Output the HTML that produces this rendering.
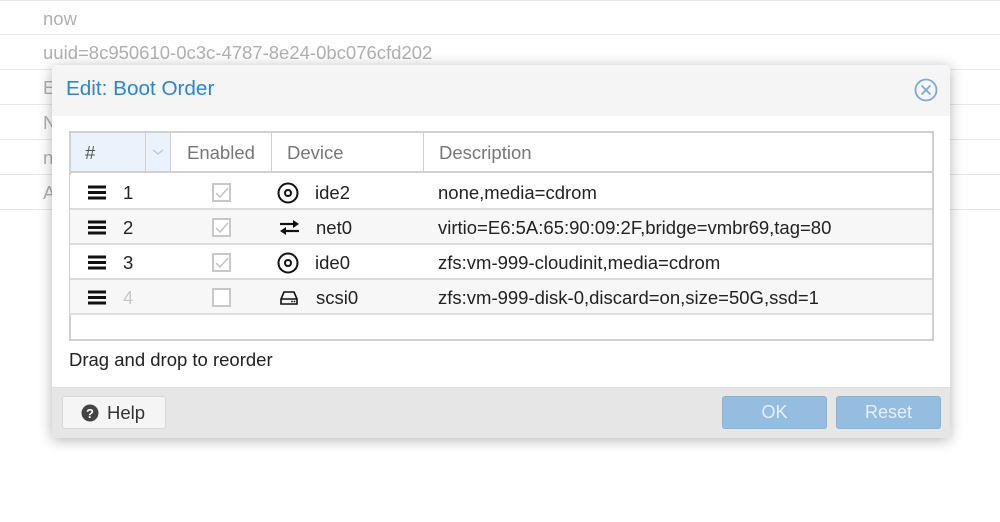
<!DOCTYPE html>
<html><head><style>
*{margin:0;padding:0;box-sizing:border-box}
body{width:1000px;height:522px;background:#fff;font-family:"Liberation Sans",sans-serif;position:relative;overflow:hidden;color:#222}
.a{position:absolute}
.bg{left:0;width:1000px;height:35px;border-bottom:1px solid #e8e8e8;color:#b0b0b0;font-size:18.5px;line-height:35px;padding-left:43px}
.t{font-size:18.5px;white-space:nowrap}
.row{left:70px;width:862px;height:35px;border-bottom:2px solid #ddd}
.cb{width:19px;height:19px;border:2px solid #c8c8c8;background:#fff}
</style></head><body>
<div class="a bg" style="top:0;border-top:1px solid #e8e8e8">now</div>
<div class="a bg" style="top:35px">uuid=8c950610-0c3c-4787-8e24-0bc076cfd202</div>
<div class="a bg" style="top:70px">E</div>
<div class="a bg" style="top:105px">N</div>
<div class="a bg" style="top:140px">n</div>
<div class="a bg" style="top:175px">A</div>

<div class="a" style="left:52px;top:65px;width:898px;height:373px;background:#fff;border-radius:5px;box-shadow:0 2px 14px rgba(0,0,0,.3);overflow:hidden">
 <div class="a" style="left:0;top:0;width:898px;height:51px;background:#f5f5f5"></div>
 <div class="a" style="left:14px;top:12px;font-size:20.7px;color:#2b86cf">Edit: Boot Order</div>
 <svg class="a" style="left:862px;top:13px" width="24" height="24" viewBox="0 0 24 24"><circle cx="12" cy="12" r="10.5" fill="none" stroke="#7fa9d9" stroke-width="1.8"/><path d="M7.5 7.5L16.5 16.5M16.5 7.5L7.5 16.5" stroke="#7fa9d9" stroke-width="1.8"/></svg>
 <div class="a" style="left:0;top:322px;width:898px;height:51px;background:#e6e6e6;border-top:1px solid #ddd"></div>
</div>

<!-- grid -->
<div class="a" style="left:69px;top:131px;width:865px;height:210px;border:2px solid #d0d0d0;background:#fff"></div>
<div class="a" style="left:71px;top:133px;width:74px;height:40px;background:#eaf3fc"></div>
<div class="a" style="left:145px;top:133px;width:26px;height:40px;background:#eaf3fc;border-left:1px solid #d0d0d0;border-right:1px solid #d0d0d0"></div>
<svg class="a" style="left:151px;top:148px" width="14" height="8"><path d="M2 2L7 6L12 2" fill="none" stroke="#b8c4cf" stroke-width="1.2"/></svg>
<div class="a" style="left:271px;top:133px;width:1px;height:40px;background:#d0d0d0"></div>
<div class="a" style="left:423px;top:133px;width:1px;height:40px;background:#d0d0d0"></div>
<div class="a" style="left:71px;top:171px;width:862px;height:2px;background:#d0d0d0"></div>
<div class="a t" style="left:85px;top:142px;color:#555">#</div>
<div class="a t" style="left:187px;top:142px;color:#777">Enabled</div>
<div class="a t" style="left:287px;top:142px;color:#777">Device</div>
<div class="a t" style="left:439px;top:142px;color:#777">Description</div>

<div class="a row" style="top:175px;background:#fff"></div>
<div class="a row" style="top:210px;background:#f7f7f7"></div>
<div class="a row" style="top:245px;background:#fff"></div>
<div class="a row" style="top:280px;background:#f7f7f7"></div>

<div class="a" style="left:0;top:175px">
 <svg class="a" style="left:88px;top:10px" width="18" height="15"><path d="M0 2H18M0 7.5H18M0 13H18" stroke="#111" stroke-width="3"/></svg>
 <div class="a t" style="left:123px;top:7px">1</div>
 <div class="a cb" style="left:212px;top:8px"></div>
 <svg class="a" style="left:214px;top:10px" width="16" height="16"><path d="M2 8L6 12L14 3" fill="none" stroke="#c0c0c0" stroke-width="1.4"/></svg>
 <svg class="a" style="left:276px;top:6px" width="24" height="24"><circle cx="12" cy="12" r="9.5" fill="none" stroke="#111" stroke-width="2"/><circle cx="12" cy="12" r="3" fill="none" stroke="#111" stroke-width="2"/></svg>
 <div class="a t" style="left:315px;top:7px">ide2</div>
 <div class="a t" style="left:438px;top:7px">none,media=cdrom</div>
</div>
<div class="a" style="left:0;top:210px">
 <svg class="a" style="left:88px;top:10px" width="18" height="15"><path d="M0 2H18M0 7.5H18M0 13H18" stroke="#111" stroke-width="3"/></svg>
 <div class="a t" style="left:123px;top:7px">2</div>
 <div class="a cb" style="left:212px;top:8px"></div>
 <svg class="a" style="left:214px;top:10px" width="16" height="16"><path d="M2 8L6 12L14 3" fill="none" stroke="#c0c0c0" stroke-width="1.4"/></svg>
 <svg class="a" style="left:279px;top:9px" width="21" height="17"><path d="M1 5H15" stroke="#111" stroke-width="2.2"/><path d="M14 1L20 5L14 9Z" fill="#111"/><path d="M20 12H6" stroke="#111" stroke-width="2.2"/><path d="M7 8L1 12L7 16Z" fill="#111"/></svg>
 <div class="a t" style="left:316px;top:7px">net0</div>
 <div class="a t" style="left:438px;top:7px">virtio=E6:5A:65:90:09:2F,bridge=vmbr69,tag=80</div>
</div>
<div class="a" style="left:0;top:245px">
 <svg class="a" style="left:88px;top:10px" width="18" height="15"><path d="M0 2H18M0 7.5H18M0 13H18" stroke="#111" stroke-width="3"/></svg>
 <div class="a t" style="left:123px;top:7px">3</div>
 <div class="a cb" style="left:212px;top:8px"></div>
 <svg class="a" style="left:214px;top:10px" width="16" height="16"><path d="M2 8L6 12L14 3" fill="none" stroke="#c0c0c0" stroke-width="1.4"/></svg>
 <svg class="a" style="left:276px;top:6px" width="24" height="24"><circle cx="12" cy="12" r="9.5" fill="none" stroke="#111" stroke-width="2"/><circle cx="12" cy="12" r="3" fill="none" stroke="#111" stroke-width="2"/></svg>
 <div class="a t" style="left:315px;top:7px">ide0</div>
 <div class="a t" style="left:438px;top:7px">zfs:vm-999-cloudinit,media=cdrom</div>
</div>
<div class="a" style="left:0;top:280px">
 <svg class="a" style="left:88px;top:10px" width="18" height="15"><path d="M0 2H18M0 7.5H18M0 13H18" stroke="#111" stroke-width="3"/></svg>
 <div class="a t" style="left:123px;top:7px;color:#c8c8c8">4</div>
 <div class="a cb" style="left:212px;top:8px"></div>
 <svg class="a" style="left:280px;top:10px" width="18" height="16"><path d="M4 2H14L17 9V14H1V9Z M1 9H17" fill="none" stroke="#111" stroke-width="1.6"/><circle cx="12" cy="11.5" r=".9" fill="#111"/><circle cx="14.5" cy="11.5" r=".9" fill="#111"/></svg>
 <div class="a t" style="left:316px;top:7px">scsi0</div>
 <div class="a t" style="left:438px;top:7px">zfs:vm-999-disk-0,discard=on,size=50G,ssd=1</div>
</div>

<div class="a t" style="left:69px;top:349px">Drag and drop to reorder</div>

<div class="a" style="left:62px;top:396px;width:104px;height:33px;background:#f5f5f5;border:1px solid #d8d8d8;border-radius:3px"></div>
<svg class="a" style="left:81px;top:404px" width="18" height="18"><circle cx="9" cy="9" r="8.5" fill="#444"/><text x="9" y="14" font-family="Liberation Sans" font-weight="bold" font-size="13" fill="#fff" text-anchor="middle">?</text></svg>
<div class="a t" style="left:107px;top:402px;color:#333">Help</div>
<div class="a" style="left:722px;top:396px;width:105px;height:33px;background:#94bde0;border:1px solid #88b3d9;border-radius:3px;color:#e6f0fa;font-size:18px;text-align:center;line-height:31px">OK</div>
<div class="a" style="left:836px;top:396px;width:105px;height:33px;background:#94bde0;border:1px solid #88b3d9;border-radius:3px;color:#e6f0fa;font-size:18px;text-align:center;line-height:31px">Reset</div>
</body></html>
